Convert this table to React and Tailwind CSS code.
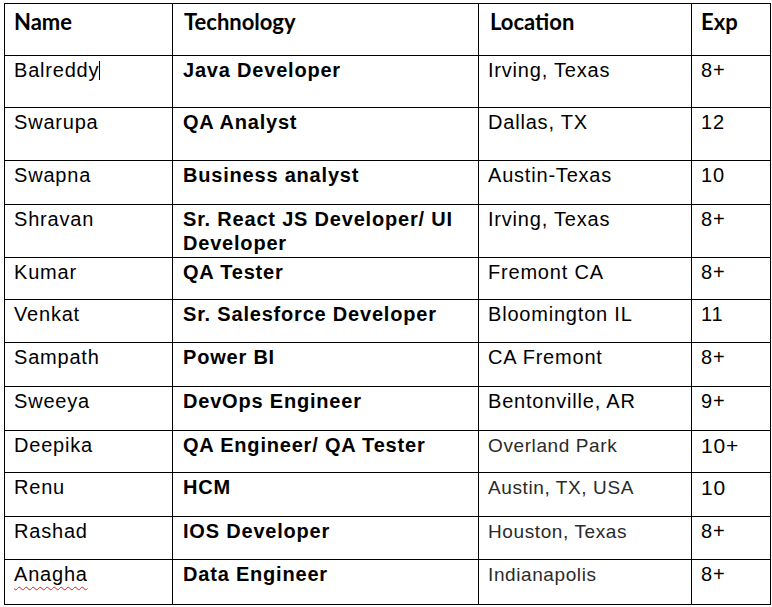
const rows = [
  { name: "Balreddy", tech: "Java Developer", loc: "Irving, Texas", exp: "8+", h: "h-[52px]", cursor: true },
  { name: "Swarupa", tech: "QA Analyst", loc: "Dallas, TX", exp: "12", h: "h-[53px]" },
  { name: "Swapna", tech: "Business analyst", loc: "Austin-Texas", exp: "10", h: "h-[44px]" },
  { name: "Shravan", tech: "Sr. React JS Developer/ UI Developer", loc: "Irving, Texas", exp: "8+", h: "h-[53px]" },
  { name: "Kumar", tech: "QA Tester", loc: "Fremont CA", exp: "8+", h: "h-[42px]" },
  { name: "Venkat", tech: "Sr. Salesforce Developer", loc: "Bloomington IL", exp: "11", h: "h-[43px]" },
  { name: "Sampath", tech: "Power BI", loc: "CA Fremont", exp: "8+", h: "h-[44px]" },
  { name: "Sweeya", tech: "DevOps Engineer", loc: "Bentonville, AR", exp: "9+", h: "h-[44px]" },
  { name: "Deepika", tech: "QA Engineer/ QA Tester", loc: "Overland Park", exp: "10+", h: "h-[42px]", small: true, bigExp: true },
  { name: "Renu", tech: "HCM", loc: "Austin, TX, USA", exp: "10", h: "h-[44px]", small: true, bigExp: true },
  { name: "Rashad", tech: "IOS Developer", loc: "Houston, Texas", exp: "8+", h: "h-[43px]", small: true },
  { name: "Anagha", tech: "Data Engineer", loc: "Indianapolis", exp: "8+", h: "h-[45px]", small: true, squiggle: true },
]

const cell = "border border-black align-top p-0"
const body = "font-['Liberation_Sans',Arial,sans-serif] text-[20px] leading-[25px] tracking-[0.8px] text-black"

export default function App() {
  return (
    <div className="w-[772px] h-[607px] bg-white pt-[3px] pl-[4px]">
      <table className="border-collapse table-fixed w-[766px]">
        <colgroup>
          <col className="w-[168px]" />
          <col className="w-[306px]" />
          <col className="w-[213px]" />
          <col className="w-[79px]" />
        </colgroup>
        <thead>
          <tr className="h-[52px] font-['Lato',sans-serif] font-bold text-[22px] leading-[26px] text-black">
            <th className={`${cell} text-left font-bold pl-[9px] pt-[5px]`}>Name</th>
            <th className={`${cell} text-left font-bold pl-[11px] pt-[5px]`}>Technology</th>
            <th className={`${cell} text-left font-bold pl-[11px] pt-[5px]`}>Location</th>
            <th className={`${cell} text-left font-bold pl-[9px] pt-[5px]`}>Exp</th>
          </tr>
        </thead>
        <tbody className={body}>
          {rows.map((r) => (
            <tr key={r.name} className={r.h}>
              <td className={`${cell} pl-[9px] pt-[2px]`}>
                <span className={r.squiggle ? "underline decoration-wavy decoration-[#e02020] decoration-1 underline-offset-[5px]" : ""}>
                  {r.name}
                </span>
                {r.cursor && <span className="inline-block w-px h-[19px] bg-black align-[-3px]" />}
              </td>
              <td className={`${cell} pl-[10px] pr-2 pt-[2px] font-bold leading-[24px]`}>{r.tech}</td>
              <td className={`${cell} pl-[9px] pt-[2px]`}>
                <span className={r.small ? "text-[19px] tracking-[0.6px] text-[#2a2a2a]" : ""}>{r.loc}</span>
              </td>
              <td className={`${cell} pl-[9px] pt-[2px]`}>
                <span className={r.bigExp ? "text-[21px]" : ""}>{r.exp}</span>
              </td>
            </tr>
          ))}
        </tbody>
      </table>
    </div>
  )
}
